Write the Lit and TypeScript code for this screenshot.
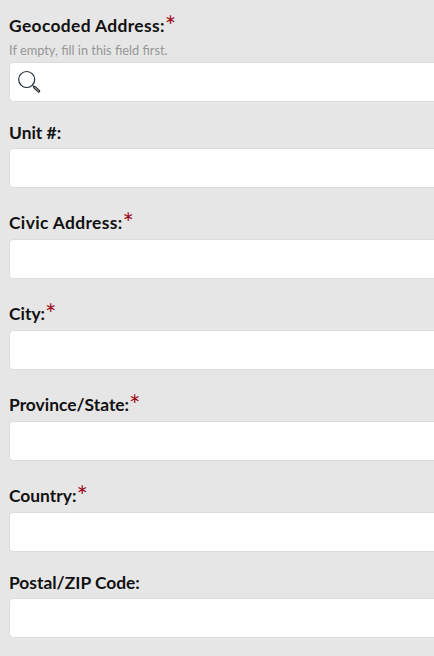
import { LitElement, html, css } from "lit";
import { customElement } from "lit/decorators.js";

const fields = [
  { label: "Geocoded Address:", req: true, wide: true, hint: "If empty, fill in this field first.", search: true },
  { label: "Unit #:", req: false },
  { label: "Civic Address:", req: true, wide: true },
  { label: "City:", req: true },
  { label: "Province/State:", req: true },
  { label: "Country:", req: true },
  { label: "Postal/ZIP Code:", req: false },
];

@customElement("app-root")
export class AppRoot extends LitElement {
  static styles = css`
    :host {
      display: block;
      width: 434px;
      height: 656px;
      overflow: hidden;
      background: #e6e6e6;
      font-family: Lato, "Liberation Sans", sans-serif;
    }
    .form {
      display: flex;
      flex-direction: column;
      padding: 15px 0 0 9px;
    }
    .field {
      display: flex;
      flex-direction: column;
      margin-bottom: 14px;
    }
    .label {
      font-size: 17.4px;
      font-weight: 700;
      line-height: 22px;
      height: 22px;
      margin-top: 6px;
      margin-bottom: 4px;
      color: #111;
    }
    .label.req {
      height: 24px;
      margin-top: 10px;
      margin-bottom: 3px;
    }
    .label.wide { letter-spacing: 0.36px; }
    .field:first-child .label { margin-top: 0; }
    .star {
      color: #9e0b20;
      font-size: 27px;
      font-weight: 400;
      line-height: 0;
      vertical-align: -4px;
      letter-spacing: 0;
    }
    .hint {
      font-size: 12.8px;
      line-height: 16px;
      color: #969696;
      margin-bottom: 4px;
    }
    .input {
      box-sizing: border-box;
      width: 440px;
      height: 40px;
      background: #fff;
      border: 1px solid #dcdcdc;
      border-radius: 4px;
      display: flex;
      align-items: center;
      padding-left: 8px;
    }
    svg { display: block; }
  `;

  render() {
    return html`<div class="form">
      ${fields.map(
        (f) => html`<div class="field">
          <div class="label ${f.req ? "req" : ""} ${f.wide ? "wide" : ""}">${f.label}${f.req ? html`<span class="star">*</span>` : ""}</div>
          ${f.hint ? html`<div class="hint">${f.hint}</div>` : ""}
          <div class="input">
            ${f.search
              ? html`<svg width="24" height="24" viewBox="0 0 24 24" fill="none">
                  <circle cx="8.7" cy="9.5" r="8" stroke="#1f2a33" stroke-width="1.2"></circle>
                  <path d="M14.5 15.4l1.6 1.5" stroke="#1f2a33" stroke-width="1.1"></path>
                  <path d="M16.6 17.3l4.2 3.8" stroke="#222" stroke-width="3" stroke-linecap="round"></path>
                  <path d="M16.8 17.5l3.8 3.4" stroke="#8a8f94" stroke-width="1.3" stroke-linecap="round"></path>
                </svg>`
              : ""}
          </div>
        </div>`
      )}
    </div>`;
  }
}
